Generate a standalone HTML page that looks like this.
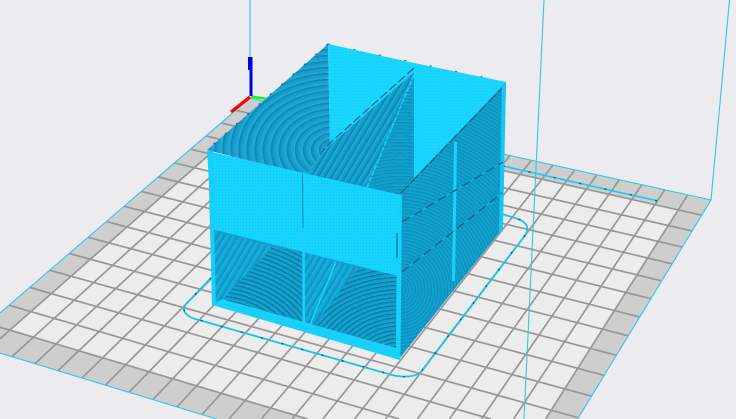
<!DOCTYPE html>
<html><head><meta charset="utf-8"><style>
html,body{margin:0;padding:0;width:736px;height:419px;overflow:hidden;background:#ebebf0}
svg{display:block;position:absolute;left:0;top:0;overflow:hidden}
</style></head><body>
<svg width="736" height="419" viewBox="0 0 736 419" xmlns="http://www.w3.org/2000/svg">
<defs>
<radialGradient id="a1" gradientUnits="userSpaceOnUse" cx="0" cy="0" r="7" spreadMethod="repeat" gradientTransform="translate(335 150) scale(1.15 .85)"><stop offset="0" stop-color="#22addc"/><stop offset=".7" stop-color="#1597c6"/><stop offset="1" stop-color="#0e7fa8"/></radialGradient>
<radialGradient id="a2" gradientUnits="userSpaceOnUse" cx="0" cy="0" r="3.2" spreadMethod="repeat" gradientTransform="translate(400 290) scale(1 1.05)"><stop offset="0" stop-color="#11a6d4"/><stop offset=".65" stop-color="#0f9ac6"/><stop offset="1" stop-color="#0b86ae"/></radialGradient>
<radialGradient id="a3" gradientUnits="userSpaceOnUse" cx="0" cy="0" r="4.5" spreadMethod="repeat" gradientTransform="translate(215 360) scale(1.1 .9)"><stop offset="0" stop-color="#13a9d9"/><stop offset=".6" stop-color="#0f9ccb"/><stop offset=".85" stop-color="#0d7a9f"/><stop offset="1" stop-color="#10607e"/></radialGradient>
<radialGradient id="a4" gradientUnits="userSpaceOnUse" cx="0" cy="0" r="4.5" spreadMethod="repeat" gradientTransform="translate(400 370) scale(1.1 .9)"><stop offset="0" stop-color="#13a9d9"/><stop offset=".6" stop-color="#0f9ccb"/><stop offset=".85" stop-color="#0d7a9f"/><stop offset="1" stop-color="#10607e"/></radialGradient>
<linearGradient id="a5" gradientUnits="userSpaceOnUse" x1="0" y1="0" x2="5" y2="3" spreadMethod="repeat"><stop offset="0" stop-color="#17b4e4"/><stop offset=".6" stop-color="#11a2d2"/><stop offset="1" stop-color="#0e8ab4"/></linearGradient>
<linearGradient id="a6" gradientUnits="userSpaceOnUse" x1="330" y1="170" x2="335" y2="173" spreadMethod="repeat"><stop offset="0" stop-color="#1cb0de"/><stop offset=".6" stop-color="#1299c8"/><stop offset="1" stop-color="#0d7fa8"/></linearGradient>
<pattern id="b" width="3" height="3" patternUnits="userSpaceOnUse"><rect width="3" height="3" fill="#16d3ff"/><rect width="1" height="1" fill="#12c4f0"/></pattern>
<pattern id="b2" width="3" height="3" patternUnits="userSpaceOnUse"><rect width="3" height="3" fill="#19d6ff"/><rect x="1" y="1" width="1" height="1" fill="#14cbf6"/></pattern>
</defs>
<!-- plate -->
<polygon points="250,98 711,200 577.6,419 216.5,419 0,353 0,313" fill="#cecece"/>
<polygon points="254.7,114.6 678.2,209.9 545.6,419 307.7,419 9.8,330.1" fill="#ececec"/>
<path fill="none" stroke="#979797" stroke-width="1.7" d="M268.9 102.2L0 338.7M287.9 106.4L12 356.6M307.1 110.6L35 363.6M326.5 114.9L58 370.6M346.1 119.3L82 378M365.9 123.6L105.5 385M385.8 128.1L129 392.3M406 132.5L153 399.6M426.4 137L177 407M447 141.6L202 414.6M467.8 146.2L229 419M488.8 150.8L261.3 419M510 155.5L292.1 419M531.4 160.3L322.8 419M553 165L354.6 419M574.9 169.9L385.5 419M597 174.8L417.4 419M619.3 179.7L449.5 419M641.9 184.7L481.5 419M664.7 189.8L513.6 419M687.7 194.9L545.6 419"/>
<path fill="none" stroke="#979797" stroke-width="1.7" d="M235.7 110.3L701.7 215.2M221 122.9L692.2 231M206 135.9L682.3 247.1M190.5 149.2L672.2 263.8M174.6 162.9L661.7 280.9M158.3 177L651 298.7M141.5 191.4L639.8 316.9M124.3 206.3L628.4 335.8M106.5 221.6L616.5 355.3M88.2 237.3L604.2 375.4M69.3 253.5L591.5 396.2M49.9 270.3L578.4 417.8M29.9 287.5L490.8 419M9.3 305.3L399.2 419M0 327.2L307.6 419"/>
<path fill="none" stroke="#35c6e6" stroke-width="1.1" d="M0 313L250 98L711 200L577.6 419M0 353L216.5 419"/>
<!-- build volume lines -->
<g fill="none" stroke="#35c6e6" stroke-width="1.1">
<path d="M250 0V58"/><path d="M729.5 0L711 200"/><path d="M544 0L524 419"/>
</g>
<!-- skirt -->
<path d="M503 166L658 201" stroke="#12cdf2" stroke-width="1.6" fill="none"/>
<path d="M503 166L658 201" stroke="#0b5f7c" stroke-width="1.5" fill="none" stroke-dasharray="2 24"/>
<path d="M211 278L186 304Q180 312 192 318L392 375Q410 379 420 373L526 234Q531 224 518 219L502 214" stroke="#17c6ec" stroke-width="1.8" fill="none"/>
<path d="M211 278L186 304Q180 312 192 318L392 375Q410 379 420 373L526 234Q531 224 518 219L502 214" stroke="#0b5f7c" stroke-width="1.4" fill="none" stroke-dasharray="2 19"/>
<!-- axes -->
<path d="M250 97L231 112" stroke="#f00" stroke-width="3.2"/>
<path d="M251 96.5L267 99" stroke="#0f0" stroke-width="2.4"/>
<path d="M248 57H252.5V96H249.5V70H248Z" fill="#0000e6"/>
<!-- right wall -->
<path d="M400 195L414 178L506 82L502 229L400 358Z" fill="url(#a2)"/>
<!-- inner top faces -->
<path d="M328 44L207 150L305 175L330 145Z" fill="url(#a1)"/>
<path d="M328 44L414 63V72L330 145Z" fill="url(#b2)"/>
<path d="M414 63L506 82L414 178Z" fill="url(#b2)"/>
<path d="M414 72L330 145L305 175L367 190Z" fill="url(#a6)"/>
<path d="M414 72L367 190L401 197L414 178Z" fill="url(#a2)"/>
<path d="M414 68L330 143L322 152" stroke="#0c6786" stroke-width="1.2" fill="none" stroke-dasharray="9 3"/>
<path d="M414 75L367 187" stroke="#1ad2fb" stroke-width="1.4" fill="none" stroke-dasharray="5 1.5"/>
<path d="M401 193L506 84" stroke="#0b5f7c" stroke-width="1" fill="none" stroke-dasharray="11 3"/>
<path d="M328 44L207 150" stroke="#0d6b8c" stroke-width="1.4" fill="none" stroke-dasharray="2 13"/>
<path d="M328 44L506 82" stroke="#0c7ba0" stroke-width="1" fill="none" stroke-dasharray="2 24"/>
<!-- interior below front -->
<path d="M212 229L397 275L398 352L214 302Z" fill="#10a0d0"/>
<path d="M213 230L272 247L222 300L213 303Z" fill="url(#a5)"/>
<path d="M272 247L303 252V327L222 300Z" fill="url(#a3)"/>
<path d="M303 252L358 268L312 328L303 327Z" fill="url(#a5)"/>
<path d="M358 268L397 275L397 352L312 328Z" fill="url(#a4)"/>
<path d="M336 262L309 327" stroke="#1ad4fc" stroke-width="1.6"/>
<!-- front wall -->
<path d="M207 151L401 195L398 276L212 229Z" fill="url(#b)"/>
<!-- verticals and floor -->
<path d="M212 305L400 360V349L222 299Z" fill="#19d0fb"/>
<path d="M208 151L212 151L216 305H212Z" fill="#16d0fa"/>
<path d="M302 174H304.5L305 328H302.5Z" fill="#18d2fb"/>
<path d="M302.5 174L303 228" stroke="#0d8fb8" stroke-width="1"/>
<path d="M397 195H402L400.5 358H396Z" fill="#16d2fb"/>
<path d="M397 233V258" stroke="#0b6c8c" stroke-width="1.2"/>
<path d="M454 142H457L455 281H452Z" fill="#18d3fb"/>
<path d="M502 84L506 82L503 229L499 234Z" fill="#15c8f2"/>
<!-- wall horizontals -->
<g fill="none" stroke-width="1.2">
<path d="M402 222L503 162" stroke="#12b6e0"/>
<path d="M402 222L503 162" stroke="#0b5f7c" stroke-dasharray="9 5"/>
<path d="M402 272L502 193" stroke="#12b6e0"/>
<path d="M402 272L502 193" stroke="#0b5f7c" stroke-dasharray="9 5"/>
</g>
</svg>
</body></html>
